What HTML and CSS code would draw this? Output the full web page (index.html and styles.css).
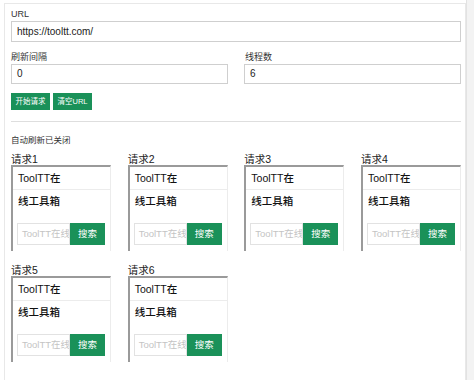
FILE: index.html
```html
<!DOCTYPE html>
<html lang="zh">
<head>
<meta charset="utf-8">
<title>ToolTT</title>
<link rel="stylesheet" href="styles.css">
</head>
<body>
<div class="card">
  <div class="field">
    <label class="lbl">URL</label>
    <div class="input url">https://tooltt.com/</div>
  </div>
  <div class="row2">
    <div class="field">
      <label class="lbl">刷新间隔</label>
      <div class="input">0</div>
    </div>
    <div class="field">
      <label class="lbl">线程数</label>
      <div class="input">6</div>
    </div>
  </div>
  <div class="btns">
    <button class="btn">开始请求</button>
    <button class="btn">清空URL</button>
  </div>
  <div class="rule"></div>
  <div class="status">自动刷新已关闭</div>
  <div class="grid">
    <div class="item"><div class="name">请求1</div><div class="frame"><div class="head">ToolTT在</div><div class="sub">线工具箱</div><div class="search"><div class="sinput">ToolTT在线</div><div class="sbtn">搜索</div></div></div></div>
    <div class="item"><div class="name">请求2</div><div class="frame"><div class="head">ToolTT在</div><div class="sub">线工具箱</div><div class="search"><div class="sinput">ToolTT在线</div><div class="sbtn">搜索</div></div></div></div>
    <div class="item"><div class="name">请求3</div><div class="frame"><div class="head">ToolTT在</div><div class="sub">线工具箱</div><div class="search"><div class="sinput">ToolTT在线</div><div class="sbtn">搜索</div></div></div></div>
    <div class="item"><div class="name">请求4</div><div class="frame"><div class="head">ToolTT在</div><div class="sub">线工具箱</div><div class="search"><div class="sinput">ToolTT在线</div><div class="sbtn">搜索</div></div></div></div>
    <div class="item"><div class="name">请求5</div><div class="frame"><div class="head">ToolTT在</div><div class="sub">线工具箱</div><div class="search"><div class="sinput">ToolTT在线</div><div class="sbtn">搜索</div></div></div></div>
    <div class="item"><div class="name">请求6</div><div class="frame"><div class="head">ToolTT在</div><div class="sub">线工具箱</div><div class="search"><div class="sinput">ToolTT在线</div><div class="sbtn">搜索</div></div></div></div>
  </div>
</div>
</body>
</html>
```
FILE: styles.css
```css
html, body {
  margin: 0;
  padding: 0;
  height: 100%;
  overflow: hidden;
}
body {
  font-family: "Liberation Sans", "Noto Sans CJK SC", sans-serif;
  color: #222;
  background: linear-gradient(to right, #fff 0, #fff 466px, #e2e2e2 466px, #e2e2e2 467px, #f3f3f3 467px);
}
.card {
  box-sizing: border-box;
  margin: 3px 8px 0 4px;
  border: 1px solid #e8e8e8;
  border-bottom: none;
  padding: 4px 4px 0 6px;
  height: 377px;
  background: #fff;
}
.lbl {
  display: block;
  font-size: 9px;
  line-height: 12px;
  height: 12px;
  margin-bottom: 1px;
  color: #333;
}
.input {
  box-sizing: border-box;
  height: 20px;
  border: 1px solid #cfcfcf;
  padding: 0 5px;
  font-size: 10px;
  line-height: 18px;
  color: #222;
}
.input.url {
  height: 21px;
  line-height: 19px;
}
.row2 {
  display: grid;
  grid-template-columns: 217px 217px;
  column-gap: 16px;
  margin-top: 9px;
}
.row2 .field + .field .lbl { padding-left: 1px; }
.btns {
  display: flex;
  gap: 3px;
  margin-top: 9px;
}
.btn {
  height: 17px;
  width: 39px;
  padding: 0;
  border: none;
  background: #1a9159;
  color: #fff;
  font-family: "Liberation Sans", "Noto Sans CJK SC", sans-serif;
  font-size: 7.5px;
  line-height: 17px;
}
.rule {
  height: 1px;
  background: #dedede;
  margin-top: 11px;
}
.status {
  margin-top: 12px;
  font-size: 8.5px;
  line-height: 12px;
  color: #333;
}
.grid {
  display: grid;
  grid-template-columns: repeat(4, 100px);
  column-gap: 16.67px;
  row-gap: 13px;
  margin-top: 7px;
}
.name {
  font-size: 10.5px;
  line-height: 12px;
  height: 12px;
  color: #222;
}
.frame {
  box-sizing: border-box;
  height: 86px;
  border-top: 2px solid #9a9a9a;
  border-left: 2px solid #9a9a9a;
  border-right: 1px solid #ececec;
  overflow: hidden;
}
.head {
  height: 18px;
  padding: 4px 0 0 5px;
  font-size: 10.5px;
  line-height: 14px;
  font-weight: 500;
  color: #111;
  border-bottom: 1px solid #ececec;
}
.sub {
  padding: 4px 0 0 5px;
  font-size: 10.5px;
  line-height: 14px;
  font-weight: 500;
  color: #111;
}
.search {
  display: flex;
  margin: 15px 0 0 4px;
  height: 22px;
}
.sinput {
  box-sizing: border-box;
  width: 53px;
  height: 22px;
  border: 1px solid #e2e2e2;
  padding-left: 4px;
  font-size: 9.5px;
  line-height: 20px;
  color: #c4c4c4;
  white-space: nowrap;
  overflow: hidden;
}
.sbtn {
  width: 35px;
  height: 22px;
  background: #1a9159;
  color: #fff;
  font-size: 9.5px;
  line-height: 22px;
  text-align: center;
}
```
